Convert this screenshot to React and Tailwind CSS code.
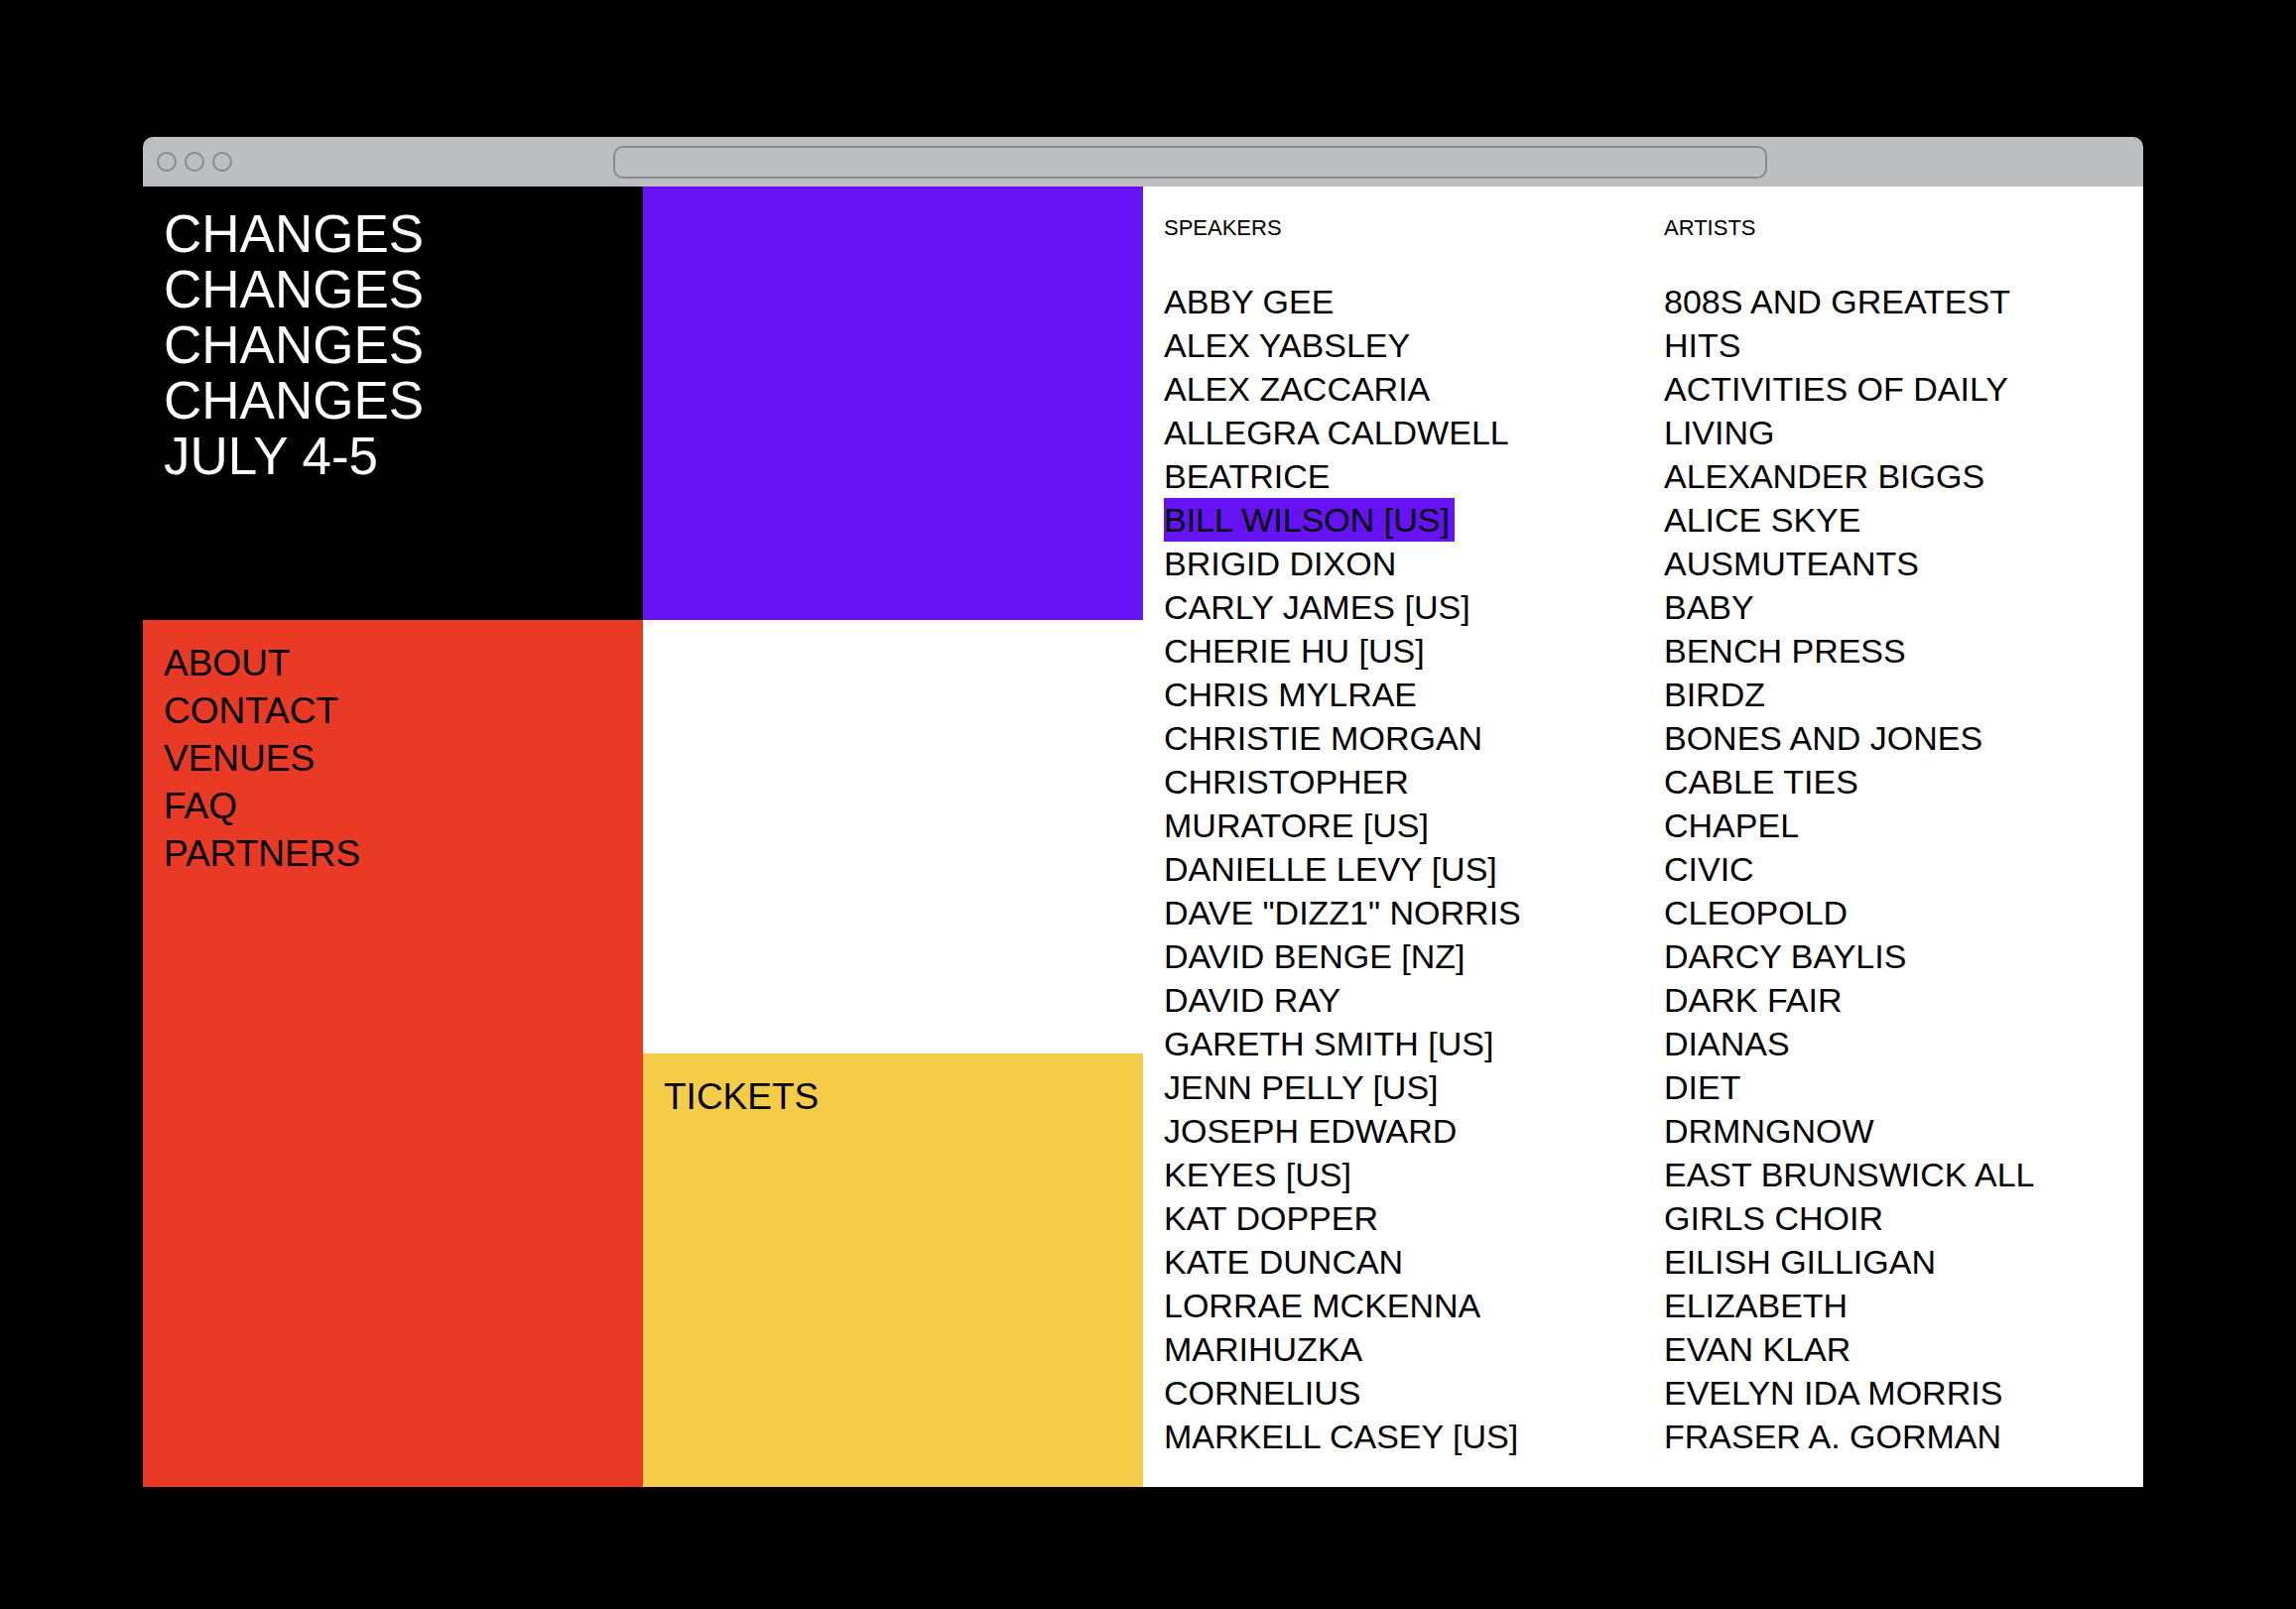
const speakers = [
  "ABBY GEE",
  "ALEX YABSLEY",
  "ALEX ZACCARIA",
  "ALLEGRA CALDWELL",
  "BEATRICE",
  "BILL WILSON [US]",
  "BRIGID DIXON",
  "CARLY JAMES [US]",
  "CHERIE HU [US]",
  "CHRIS MYLRAE",
  "CHRISTIE MORGAN",
  "CHRISTOPHER MURATORE [US]",
  "DANIELLE LEVY [US]",
  'DAVE "DIZZ1" NORRIS',
  "DAVID BENGE [NZ]",
  "DAVID RAY",
  "GARETH SMITH [US]",
  "JENN PELLY [US]",
  "JOSEPH EDWARD KEYES [US]",
  "KAT DOPPER",
  "KATE DUNCAN",
  "LORRAE MCKENNA",
  "MARIHUZKA CORNELIUS",
  "MARKELL CASEY [US]",
];

const artists = [
  "808S AND GREATEST HITS",
  "ACTIVITIES OF DAILY LIVING",
  "ALEXANDER BIGGS",
  "ALICE SKYE",
  "AUSMUTEANTS",
  "BABY",
  "BENCH PRESS",
  "BIRDZ",
  "BONES AND JONES",
  "CABLE TIES",
  "CHAPEL",
  "CIVIC",
  "CLEOPOLD",
  "DARCY BAYLIS",
  "DARK FAIR",
  "DIANAS",
  "DIET",
  "DRMNGNOW",
  "EAST BRUNSWICK ALL GIRLS CHOIR",
  "EILISH GILLIGAN",
  "ELIZABETH",
  "EVAN KLAR",
  "EVELYN IDA MORRIS",
  "FRASER A. GORMAN",
];

function NameList({ title, names, active }) {
  return (
    <div className="pl-[21px] pt-[20px]">
      <h2 className="text-[22px] leading-[44px] mb-[30px]">{title}</h2>
      <ul className="max-w-[392px] text-[34px] leading-[44px]">
        {names.map((name) => (
          <li key={name}>
            {name === active ? (
              <span className="inline-block bg-[#6513f5] pr-[5px]">{name}</span>
            ) : (
              name
            )}
          </li>
        ))}
      </ul>
    </div>
  );
}

export default function App() {
  return (
    <div
      className="min-h-screen bg-black pt-[138px] pl-[144px] text-black"
      style={{ fontFamily: '"Liberation Sans", Arial, sans-serif' }}
    >
      <div className="w-[2016px] rounded-t-[10px] overflow-hidden">
        {/* window chrome */}
        <div className="h-[50px] bg-[#bdbec0] flex items-center">
          <div className="ml-[14px] flex gap-2">
            <span className="size-5 rounded-full border-2 border-[#8a8a8c]"></span>
            <span className="size-5 rounded-full border-2 border-[#8a8a8c]"></span>
            <span className="size-5 rounded-full border-2 border-[#8a8a8c]"></span>
          </div>
          <div className="ml-[384px] w-[1163px] h-[33px] rounded-[10px] border-2 border-[#8a8a8c]"></div>
        </div>

        <div className="grid grid-cols-4 grid-rows-[437px_437px_437px]">
          <div className="bg-black text-white px-[21px] pt-[20px] text-[53px] leading-[56px]">
            <p>CHANGES</p>
            <p>CHANGES</p>
            <p>CHANGES</p>
            <p>CHANGES</p>
            <p>JULY 4-5</p>
          </div>
          <div className="bg-[#6513f5]"></div>
          <div className="col-span-2 row-span-3 bg-white grid grid-cols-2 overflow-hidden">
            <NameList title="SPEAKERS" names={speakers} active="BILL WILSON [US]" />
            <NameList title="ARTISTS" names={artists} />
          </div>
          <nav className="row-span-2 bg-[#e93a26] px-[21px] pt-[20px] text-[37px] leading-[48px]">
            <a className="block" href="#">ABOUT</a>
            <a className="block" href="#">CONTACT</a>
            <a className="block" href="#">VENUES</a>
            <a className="block" href="#">FAQ</a>
            <a className="block" href="#">PARTNERS</a>
          </nav>
          <div className="bg-white"></div>
          <div className="bg-[#f5cc47] px-[21px] pt-[20px] text-[37px] leading-[48px]">
            <a href="#">TICKETS</a>
          </div>
        </div>
      </div>
    </div>
  );
}
